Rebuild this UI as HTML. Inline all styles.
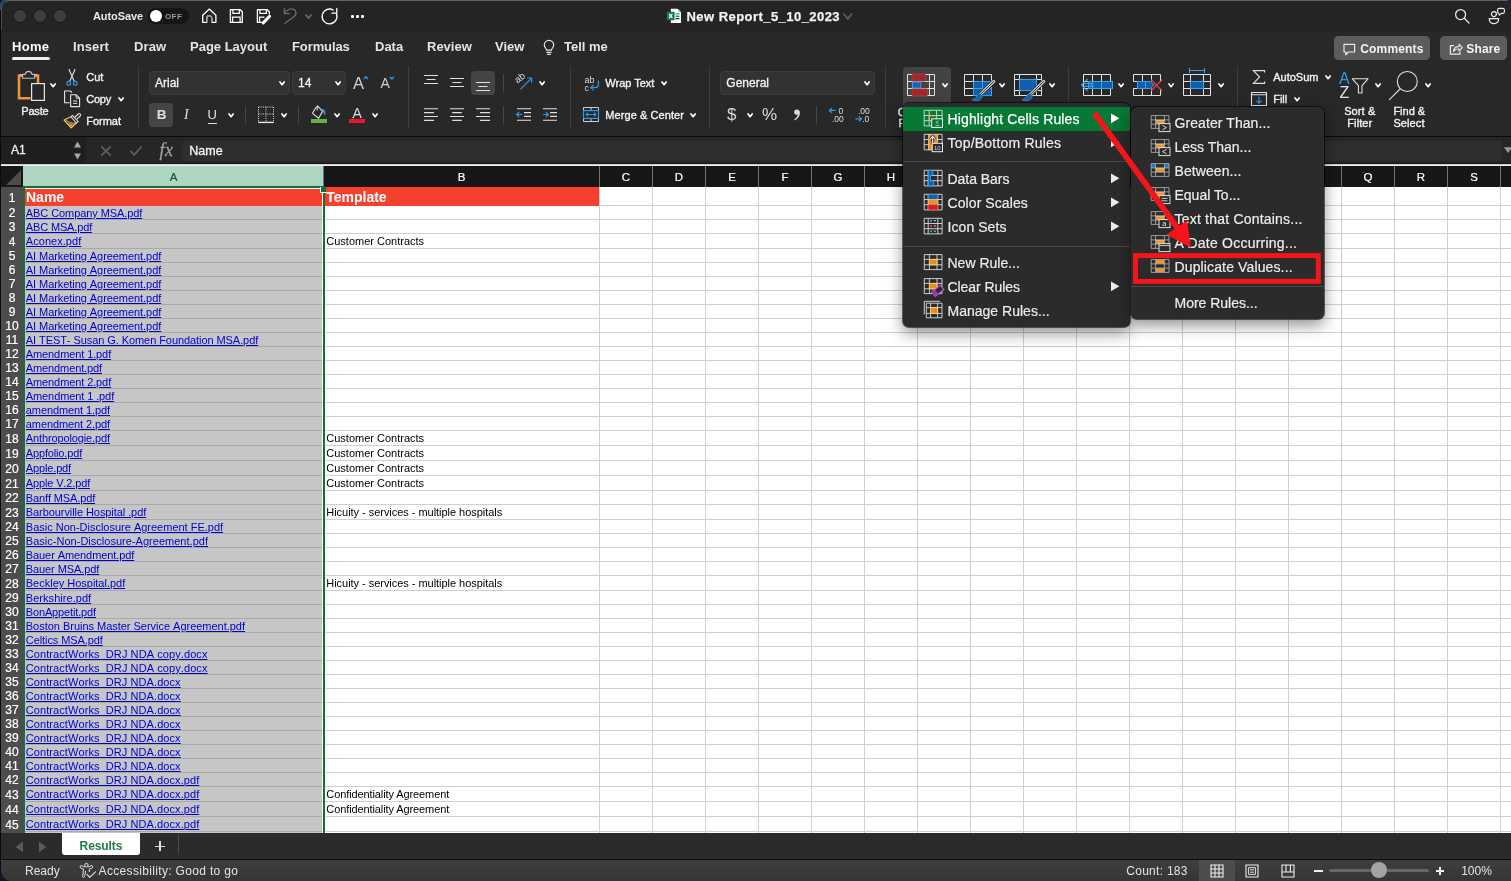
<!DOCTYPE html>
<html lang="en"><head><meta charset="utf-8"><title>New Report_5_10_2023</title>
<style>
html,body{margin:0;padding:0;background:#1e1e1e;}
body{width:1511px;height:881px;overflow:hidden;font-family:"Liberation Sans",sans-serif;}
#app{will-change:transform;position:relative;width:1511px;height:881px;overflow:hidden;background:#282828;color:#e6e6e6;}
#app div, #app span, #app svg{position:absolute;}
#app span.t{white-space:pre;}
/* grid */
#grid{left:0;top:0;width:1511px;height:881px;}
.sheetbg{left:23px;top:187px;width:1488px;height:646px;background:#fff;}
.selA{left:23px;top:187px;width:300px;height:646px;background:#c6c6c6;}
.hl{left:324px;width:1187px;height:1px;background:#cfcfcf;}
.hlA{left:25px;width:298px;height:1px;background:#a9a9a9;}
.vl{top:187px;width:1px;height:646px;background:#cfcfcf;}
.redA{left:25px;top:189px;width:296.700px;height:16.700px;background:#f4402c;}
.a1bg{left:24px;top:187px;width:299px;height:19px;background:#fff;}
.redB{left:325px;top:187px;width:274px;height:19px;background:#f4402c;}
.redA span,.redB span{left:1px;top:-1px;font:bold 14px "Liberation Sans",sans-serif;color:#fff;line-height:19px;white-space:pre;}
.redB span{left:1.200px;top:1px;}
.rowhdr{left:1px;top:187px;width:22px;height:646px;background:#4d4d4d;}
.rh{left:1px;width:22px;text-align:center;-webkit-text-stroke:0.2px #fff;font:12px "Liberation Sans",sans-serif;color:#fff;}
.ca{left:25.8px;width:297px;font:11px "Liberation Sans",sans-serif;font-kerning:none;color:#0000d4;white-space:pre;overflow:hidden;}
.ca u{position:static;text-decoration:underline;text-decoration-thickness:1px;text-underline-offset:1px;}
.cb{left:326.300px;width:272px;font:11px "Liberation Sans",sans-serif;color:#000;white-space:pre;}
.colhdr{left:1px;top:165.500px;width:1510px;height:21.500px;background:#171717;}
.corner{left:1px;top:166px;width:22px;height:21px;background:#171717;}
.corner svg{left:0;top:0;}
.chA{left:23px;top:165.500px;width:301px;height:21.500px;background:#afd6c3;color:#0e5c2f;-webkit-text-stroke:0.2px #0e5c2f;font:11.500px/22.500px "Liberation Sans",sans-serif;text-align:center;}
.ch{top:165.500px;height:21.500px;color:#fff;-webkit-text-stroke:0.2px #fff;font:11.500px/22.500px "Liberation Sans",sans-serif;text-align:center;}
.chsep{top:166px;width:1px;height:21px;background:#747474;}
.selborder{left:23px;top:186px;width:298px;height:660px;border:2px solid #12713a;border-bottom:none;box-sizing:content-box;}
.selhandle{left:320px;top:187px;width:5px;height:5px;background:#12713a;border-left:1px solid #fff;border-bottom:1px solid #fff;}
.selgap{left:322px;top:188px;width:1px;height:645px;background:#fff;}

</style></head>
<body>
<div id="app">
<div id="titlebar" style="left:0;top:0;width:1511px;height:32px;background:#242424;">
<div style="left:0;top:0;width:1511px;height:1px;background:#606060"></div>
<div style="left:14px;top:10px;width:12px;height:12px;border-radius:50%;background:#3e3e3e;box-shadow:0 0 0 0.700px #1a1a1a"></div>
<div style="left:34px;top:10px;width:12px;height:12px;border-radius:50%;background:#3e3e3e;box-shadow:0 0 0 0.700px #1a1a1a"></div>
<div style="left:54px;top:10px;width:12px;height:12px;border-radius:50%;background:#3e3e3e;box-shadow:0 0 0 0.700px #1a1a1a"></div>
<span class="t" style="left:93px;top:6.0px;font:bold 11px 'Liberation Sans',sans-serif;color:#e8e8e8;letter-spacing:-0.1px;;line-height:20px">AutoSave</span>
<div style="left:148px;top:8px;width:41px;height:16px;border-radius:8px;background:#161616;"></div>
<div style="left:150px;top:10px;width:12px;height:12px;border-radius:50%;background:#fff"></div>
<span class="t" style="left:165px;top:6.5px;font:bold 8px 'Liberation Sans',sans-serif;color:#9a9a9a;letter-spacing:0.4px;;line-height:20px">OFF</span>
<!-- home -->
<svg style="left:200px;top:6px" width="20" height="20" viewBox="0 0 20 20"><path d="M2.7 9.2L9.3 3.1L15.9 9.2V16.3H11.8V12.2a2.5 2.5 0 0 0-5 0V16.3H2.7Z" fill="none" stroke="#fff" stroke-width="1.3" stroke-linejoin="round"/><path d="M6.8 16.3V12.2a2.5 2.5 0 0 1 5 0V16.3" fill="none" stroke="#8a8a8a" stroke-width="1.3"/></svg>
<!-- save -->
<svg style="left:227px;top:6px" width="20" height="20" viewBox="0 0 20 20"><path d="M3.4 3.7H13.2L15.3 5.8V16.4H3.4Z" fill="none" stroke="#fff" stroke-width="1.3" stroke-linejoin="round"/><path d="M5.9 3.9V7.3H12.3V3.9" fill="none" stroke="#fff" stroke-width="1.2"/><path d="M5.6 16.2V11.2H13.1V16.2" fill="none" stroke="#fff" stroke-width="1.2"/></svg>
<!-- save edit -->
<svg style="left:254px;top:6px" width="22" height="20" viewBox="0 0 22 20"><path d="M8 16.4H3.4V3.7H13.2L15.3 5.8V8.5" fill="none" stroke="#fff" stroke-width="1.3" stroke-linejoin="round"/><path d="M5.9 3.9V7.3H12.3V3.9" fill="none" stroke="#fff" stroke-width="1.2"/><path d="M5.6 16.2V11.2H10.5" fill="none" stroke="#fff" stroke-width="1.2"/><path d="M9.2 16.9L15.6 10.3" stroke="#fff" stroke-width="3" stroke-linecap="round"/></svg>
<!-- undo (disabled) -->
<svg style="left:281px;top:5px" width="20" height="22" viewBox="0 0 20 22"><path d="M4 18.3L13.2 11.5a4.3 4.3 0 0 0-2.9-7.7C8 3.8 6 5 3.6 8.2" fill="none" stroke="#6a6a6a" stroke-width="1.3" stroke-linecap="round"/><path d="M3.3 3.6V8.6H8.3" fill="none" stroke="#6a6a6a" stroke-width="1.3" stroke-linecap="round" stroke-linejoin="round"/></svg>
<svg style="left:305.48px;top:13.88px" width="7.04" height="5.24" viewBox="-1 -1 7.04 5.24"><path d="M0 0L2.52 3.24L5.04 0" fill="none" stroke="#6a6a6a" stroke-width="1.7" stroke-linecap="round" stroke-linejoin="round"/></svg>
<!-- redo -->
<svg style="left:319px;top:5px" width="22" height="22" viewBox="0 0 22 22"><path d="M17.6 9.2A7.4 7.4 0 1 1 14.2 5" fill="none" stroke="#fff" stroke-width="1.3" stroke-linecap="round"/><path d="M17.8 3.4V8.2H13" fill="none" stroke="#fff" stroke-width="1.3" stroke-linecap="round" stroke-linejoin="round"/></svg>
<div style="left:351px;top:15px;width:3px;height:2.5px;background:#fff;border-radius:1px"></div>
<div style="left:356px;top:15px;width:3px;height:2.5px;background:#fff;border-radius:1px"></div>
<div style="left:361px;top:15px;width:3px;height:2.5px;background:#fff;border-radius:1px"></div>
<!-- excel file icon -->
<svg style="left:666px;top:8px" width="17" height="16" viewBox="0 0 17 16"><path d="M4.8 0.8H11.6L15 4.2V15H4.8Z" fill="#fff"/><path d="M11.6 0.8V4.2H15" fill="#d8d8d8"/><rect x="9.600" y="5.200" width="3.800" height="1.300" fill="#21a366"/><rect x="9.600" y="7.600" width="3.800" height="1.300" fill="#107c41"/><rect x="9.600" y="10" width="3.800" height="1.300" fill="#143d26"/><rect x="0.8" y="3.8" width="7.8" height="8.4" rx="0.8" fill="#14783f"/><path d="M3 5.8L6.4 10.2M6.4 5.8L3 10.2" stroke="#fff" stroke-width="1.2"/></svg>
<span class="t" style="left:686.5px;top:6.5px;font:bold 13px 'Liberation Sans',sans-serif;color:#f2f2f2;-webkit-text-stroke:0.25px #f2f2f2;letter-spacing:0.45px;;line-height:20px">New Report_5_10_2023</span>
<svg style="left:843.22px;top:12.87px" width="9.56" height="6.86" viewBox="-1 -1 9.56 6.86"><path d="M0 0L3.78 4.86L7.56 0" fill="none" stroke="#5e5e5e" stroke-width="1.7" stroke-linecap="round" stroke-linejoin="round"/></svg>
<!-- search -->
<svg style="left:1453px;top:7px" width="18" height="18" viewBox="0 0 18 18"><circle cx="7.6" cy="7.6" r="5" fill="none" stroke="#e8e8e8" stroke-width="1.3"/><path d="M11.3 11.3L16 16" stroke="#e8e8e8" stroke-width="1.3" stroke-linecap="round"/></svg>
<!-- people -->
<svg style="left:1484px;top:5px" width="24" height="22" viewBox="0 0 24 22"><circle cx="9.900" cy="9.100" r="2.500" fill="none" stroke="#f0f0f0" stroke-width="1.200"/><path d="M5.200 13.600H14.600C14.600 16.800 12.600 18.700 9.900 18.700S5.200 16.800 5.200 13.600Z" fill="none" stroke="#f0f0f0" stroke-width="1.200" stroke-linejoin="round"/><path d="M15.200 3.400H18.800A1.600 1.600 0 0 1 20.400 5V6.800A1.600 1.600 0 0 1 18.800 8.400H17.400L15.400 10.200L14.800 8.400A1.600 1.600 0 0 1 13.600 6.800V5A1.600 1.600 0 0 1 15.200 3.400Z" fill="none" stroke="#f0f0f0" stroke-width="1.100" stroke-linejoin="round"/></svg>
</div>

<div id="tabs" style="left:0;top:32px;width:1511px;height:32px;background:#282828;">
<span class="t" style="left:12px;top:4.5px;font:bold 13px 'Liberation Sans',sans-serif;color:#fff;letter-spacing:0.3px;;line-height:20px">Home</span>
<div style="left:12px;top:25px;width:38px;height:3px;border-radius:1.5px;background:#ededed"></div>
<span class="t" style="left:73px;top:4.5px;font:bold 13px 'Liberation Sans',sans-serif;color:#e4e4e4;letter-spacing:0.1px;;line-height:20px">Insert</span>
<span class="t" style="left:134px;top:4.5px;font:bold 13px 'Liberation Sans',sans-serif;color:#e4e4e4;letter-spacing:0.1px;;line-height:20px">Draw</span>
<span class="t" style="left:190px;top:4.5px;font:bold 13px 'Liberation Sans',sans-serif;color:#e4e4e4;;line-height:20px">Page Layout</span>
<span class="t" style="left:292px;top:4.5px;font:bold 13px 'Liberation Sans',sans-serif;color:#e4e4e4;letter-spacing:-0.1px;;line-height:20px">Formulas</span>
<span class="t" style="left:375px;top:4.5px;font:bold 13px 'Liberation Sans',sans-serif;color:#e4e4e4;;line-height:20px">Data</span>
<span class="t" style="left:427px;top:4.5px;font:bold 13px 'Liberation Sans',sans-serif;color:#e4e4e4;;line-height:20px">Review</span>
<span class="t" style="left:495px;top:4.5px;font:bold 13px 'Liberation Sans',sans-serif;color:#e4e4e4;;line-height:20px">View</span>
<svg style="left:541px;top:5px" width="16" height="20" viewBox="0 0 16 20"><path d="M5.6 13.2c0-1.6-2.3-2.6-2.3-5.2a4.7 4.7 0 0 1 9.4 0c0 2.6-2.3 3.6-2.3 5.2Z" fill="none" stroke="#e4e4e4" stroke-width="1.2" stroke-linejoin="round"/><path d="M5.9 15.4H10.1M6.6 17.4H9.4" stroke="#e4e4e4" stroke-width="1.2" stroke-linecap="round"/></svg>
<span class="t" style="left:564px;top:4.5px;font:bold 13px 'Liberation Sans',sans-serif;color:#e4e4e4;;line-height:20px">Tell me</span>
<div style="left:1334px;top:4px;width:95.800px;height:23.700px;border-radius:4.500px;background:#5c5c5c"></div>
<svg style="left:1341.500px;top:9.800px" width="16" height="16" viewBox="0 0 16 16"><path d="M2 2.3H12.6V10H6.4L3.8 12.8V10H2Z" fill="none" stroke="#e8e8e8" stroke-width="1.2" stroke-linejoin="round"/></svg>
<span class="t" style="left:1360.300px;top:6.699999999999999px;font:bold 12px 'Liberation Sans',sans-serif;color:#f4f4f4;letter-spacing:0.15px;;line-height:20px">Comments</span>
<div style="left:1440px;top:4px;width:67px;height:23.700px;border-radius:4.500px;background:#5c5c5c"></div>
<svg style="left:1447.500px;top:8.500px" width="16" height="16" viewBox="0 0 16 16"><path d="M6 4.6H2.4V13.2H12V10.6" fill="none" stroke="#e8e8e8" stroke-width="1.2" stroke-linejoin="round"/><path d="M5.4 10.4c.4-3 2.4-4.8 5.6-4.8V3.2L14.4 6.6L11 10V7.8c-2.4 0-4 .6-5.6 2.6Z" fill="none" stroke="#e8e8e8" stroke-width="1.1" stroke-linejoin="round"/></svg>
<span class="t" style="left:1466.300px;top:6.699999999999999px;font:bold 12px 'Liberation Sans',sans-serif;color:#f4f4f4;letter-spacing:0.15px;;line-height:20px">Share</span>
</div>

<div id="ribbon" style="left:0;top:64px;width:1511px;height:73px;background:#282828;">
<div style="left:0;top:71.500px;width:1511px;height:1.700px;background:#0a0a0a"></div>
<!-- ===== clipboard ===== -->
<svg style="left:16px;top:5px" width="32" height="34" viewBox="0 0 32 34">
<path d="M7.2 6.8H3V29.3H14.5M19 6.8H22V14.5" fill="none" stroke="#f0953a" stroke-width="2.6"/>
<path d="M7.2 5.6H3.1M22 5.6H19" stroke="#f8c98b" stroke-width="0.8" fill="none"/>
<path d="M6.6 9.2V5.4H9.2C9.6 3.4 10.9 2.4 12.6 2.4S15.6 3.4 16 5.4H18.6V9.2Z" fill="#282828" stroke="#bdbdbd" stroke-width="1.1" stroke-linejoin="round"/>
<rect x="15.6" y="14.6" width="12.8" height="16.8" fill="#282828" stroke="#e6e6e6" stroke-width="1.2"/>
</svg>
<svg style="left:50.10px;top:19.15px" width="6.20" height="4.70" viewBox="-1 -1 6.20 4.70"><path d="M0 0L2.10 2.70L4.20 0" fill="none" stroke="#fff" stroke-width="1.7" stroke-linecap="round" stroke-linejoin="round"/></svg>
<span class="t" style="left:21.3px;top:36.9px;font:11px 'Liberation Sans',sans-serif;color:#f2f2f2;-webkit-text-stroke:0.35px #f2f2f2;letter-spacing:-0.2px;line-height:20px">Paste</span>
<!-- scissors -->
<svg style="left:64px;top:4px" width="16" height="19" viewBox="0 0 16 19">
<path d="M5 1.5L10.2 13.2M11 1.5L5.8 13.2" stroke="#e6e6e6" stroke-width="1.1" stroke-linecap="round" fill="none"/>
<circle cx="4.7" cy="15.3" r="1.9" fill="none" stroke="#2f97e6" stroke-width="1.2"/>
<circle cx="11.3" cy="15.3" r="1.9" fill="none" stroke="#2f97e6" stroke-width="1.2"/>
</svg>
<span class="t" style="left:86.2px;top:3.3000000000000007px;font:11px 'Liberation Sans',sans-serif;color:#f2f2f2;-webkit-text-stroke:0.35px #f2f2f2;line-height:20px">Cut</span>
<!-- copy -->
<svg style="left:63px;top:25.300px" width="19" height="19" viewBox="0 0 19 19">
<path d="M6.6 13.8H1.6V2H7.4L9 3.6" fill="none" stroke="#e6e6e6" stroke-width="1.1" stroke-linejoin="round"/>
<path d="M7.6 5.8H13.2L16.6 9.2V17.6H7.6Z" fill="none" stroke="#e6e6e6" stroke-width="1.1" stroke-linejoin="round"/>
<path d="M13.2 5.8V9.2H16.6" fill="none" stroke="#e6e6e6" stroke-width="1"/>
<path d="M10.2 12H14.2M10.2 14.4H14.2" stroke="#e6e6e6" stroke-width="1"/>
</svg>
<span class="t" style="left:86.2px;top:25.0px;font:11px 'Liberation Sans',sans-serif;color:#f2f2f2;-webkit-text-stroke:0.35px #f2f2f2;letter-spacing:-0.2px;line-height:20px">Copy</span>
<svg style="left:118.10px;top:33.15px" width="6.20" height="4.70" viewBox="-1 -1 6.20 4.70"><path d="M0 0L2.10 2.70L4.20 0" fill="none" stroke="#fff" stroke-width="1.7" stroke-linecap="round" stroke-linejoin="round"/></svg>
<!-- format painter -->
<svg style="left:63px;top:48px" width="19" height="18" viewBox="0 0 19 18">
<path d="M4.900 11.300L10.600 12.100L8.200 15.100Z" fill="#ea8a24"/>
<path d="M7.900 4.700L1.100 8L8.200 15.900L13.300 11" fill="none" stroke="#f5c869" stroke-width="1.200" stroke-linejoin="round"/>
<path d="M3.200 8.400C6 10.600 9 11.400 12.400 11.200" fill="none" stroke="#f5c869" stroke-width="0.900"/>
<path d="M7.900 4.700L9.500 3.300L15.200 9.600L13.300 11Z" fill="none" stroke="#d8d8d8" stroke-width="1.100" stroke-linejoin="round"/>
<path d="M11.500 5.500L15.300 2A1.300 1.300 0 0 1 17.200 4L13.400 7.600" fill="none" stroke="#d8d8d8" stroke-width="1.100" stroke-linejoin="round"/>
</svg>
<span class="t" style="left:86.2px;top:47.0px;font:11px 'Liberation Sans',sans-serif;color:#f2f2f2;-webkit-text-stroke:0.35px #f2f2f2;line-height:20px">Format</span>
<div style="left:138px;top:2px;width:1px;height:62px;background:#3d3d3d"></div>
<!-- ===== font ===== -->
<div style="left:149px;top:7px;width:141px;height:24px;box-sizing:border-box;border:1px solid #3c3c3c;border-radius:4px;background:#323232"></div>
<span class="t" style="left:155px;top:9.0px;font:12px 'Liberation Sans',sans-serif;color:#f2f2f2;-webkit-text-stroke:0.3px #f2f2f2;line-height:20px">Arial</span>
<svg style="left:278.90px;top:17.15px" width="6.20" height="4.70" viewBox="-1 -1 6.20 4.70"><path d="M0 0L2.10 2.70L4.20 0" fill="none" stroke="#fff" stroke-width="1.7" stroke-linecap="round" stroke-linejoin="round"/></svg>
<div style="left:292px;top:7px;width:54px;height:24px;box-sizing:border-box;border:1px solid #3c3c3c;border-radius:4px;background:#323232"></div>
<span class="t" style="left:298px;top:9.0px;font:12px 'Liberation Sans',sans-serif;color:#f2f2f2;-webkit-text-stroke:0.3px #f2f2f2;line-height:20px">14</span>
<svg style="left:334.90px;top:17.15px" width="6.20" height="4.70" viewBox="-1 -1 6.20 4.70"><path d="M0 0L2.10 2.70L4.20 0" fill="none" stroke="#fff" stroke-width="1.7" stroke-linecap="round" stroke-linejoin="round"/></svg>
<span class="t" style="left:353px;top:8.5px;font:16.500px 'Liberation Sans',sans-serif;color:#d0d0d0;line-height:20px">A</span>
<svg style="left:362px;top:11px" width="8" height="6" viewBox="0 0 8 6"><path d="M1.800 4L3.900 1.800L6 4" fill="none" stroke="#2f97e6" stroke-width="1.300"/></svg>
<span class="t" style="left:380.400px;top:9.3px;font:14px 'Liberation Sans',sans-serif;color:#d0d0d0;line-height:20px">A</span>
<svg style="left:388px;top:11px" width="8" height="6" viewBox="0 0 8 6"><path d="M1.800 1.800L3.900 4L6 1.800" fill="none" stroke="#2f97e6" stroke-width="1.300"/></svg>
<div style="left:149px;top:39px;width:24px;height:24px;border-radius:4px;background:#454545"></div>
<span class="t" style="left:156.8px;top:41.0px;font:bold 13.5px 'Liberation Sans',sans-serif;color:#e0e0e0;line-height:20px">B</span>
<span class="t" style="left:184px;top:41.0px;font:italic 14px 'Liberation Serif',serif;color:#e0e0e0;line-height:20px">I</span>
<span class="t" style="left:207.5px;top:40.5px;font:13px 'Liberation Sans',sans-serif;color:#e0e0e0;line-height:20px">U</span>
<div style="left:207.5px;top:59px;width:9.5px;height:1px;background:#e0e0e0"></div>
<svg style="left:227.90px;top:49.15px" width="6.20" height="4.70" viewBox="-1 -1 6.20 4.70"><path d="M0 0L2.10 2.70L4.20 0" fill="none" stroke="#fff" stroke-width="1.7" stroke-linecap="round" stroke-linejoin="round"/></svg>
<div style="left:245px;top:42px;width:1px;height:18px;background:#444"></div>
<!-- borders icon -->
<svg style="left:257px;top:41px" width="18" height="20" viewBox="0 0 18 20">
<path d="M1.5 2H16.5M1.5 2V16M16.5 2V16M9 2V16M1.5 9H16.5" fill="none" stroke="#e0e0e0" stroke-width="1" stroke-dasharray="1 1.2"/>
<path d="M1.2 17.4H16.8" stroke="#e6e6e6" stroke-width="1.4"/>
</svg>
<svg style="left:280.90px;top:49.15px" width="6.20" height="4.70" viewBox="-1 -1 6.20 4.70"><path d="M0 0L2.10 2.70L4.20 0" fill="none" stroke="#fff" stroke-width="1.7" stroke-linecap="round" stroke-linejoin="round"/></svg>
<div style="left:298px;top:42px;width:1px;height:18px;background:#444"></div>
<!-- fill -->
<svg style="left:309px;top:40px" width="20" height="16" viewBox="0 0 20 16">
<path d="M6.4 4.2L3.4 9.4L9.6 14.2L13.6 7.4L8.8 2.2Z" fill="none" stroke="#e0e0e0" stroke-width="1.1" stroke-linejoin="round"/>
<path d="M8.2 6.4V1.6" stroke="#e0e0e0" stroke-width="1"/>
<path d="M13.6 5.6c1.6.8 2.4 2.4 2 4.400" fill="none" stroke="#2f97e6" stroke-width="1.6" stroke-linecap="round"/>
</svg>
<div style="left:311px;top:55.300px;width:16px;height:4px;background:#62b246"></div>
<svg style="left:333.90px;top:49.15px" width="6.20" height="4.70" viewBox="-1 -1 6.20 4.70"><path d="M0 0L2.10 2.70L4.20 0" fill="none" stroke="#fff" stroke-width="1.7" stroke-linecap="round" stroke-linejoin="round"/></svg>
<span class="t" style="left:352.500px;top:38.5px;font:14px 'Liberation Sans',sans-serif;color:#d8d8d8;line-height:20px">A</span>
<div style="left:349px;top:55.300px;width:16px;height:4px;background:#f0142a"></div>
<svg style="left:371.90px;top:49.15px" width="6.20" height="4.70" viewBox="-1 -1 6.20 4.70"><path d="M0 0L2.10 2.70L4.20 0" fill="none" stroke="#fff" stroke-width="1.7" stroke-linecap="round" stroke-linejoin="round"/></svg>
<div style="left:408px;top:2px;width:1px;height:62px;background:#3d3d3d"></div>
<!-- ===== alignment ===== -->
<svg style="left:423px;top:9px" width="16" height="14" viewBox="0 0 16 14"><path d="M1 2.5H15M3.5 6.5H12.5M1 10.5H15" stroke="#e0e0e0" stroke-width="1.1"/></svg>
<svg style="left:449px;top:12px" width="16" height="14" viewBox="0 0 16 14"><path d="M1 2.5H15M3.5 6.5H12.5M1 10.5H15" stroke="#e0e0e0" stroke-width="1.1"/></svg>
<div style="left:471px;top:7px;width:24px;height:24px;border-radius:4px;background:#454545"></div>
<svg style="left:475px;top:16px" width="16" height="14" viewBox="0 0 16 14"><path d="M1 2.5H15M3.5 6.5H12.5M1 10.5H15" stroke="#e0e0e0" stroke-width="1.1"/></svg>
<svg style="left:423px;top:42px" width="16" height="17" viewBox="0 0 16 17"><path d="M1 2.7H15M1 6.6H11M1 10.5H15M1 14.4H11" stroke="#e0e0e0" stroke-width="1.1"/></svg>
<svg style="left:449px;top:42px" width="16" height="17" viewBox="0 0 16 17"><path d="M1 2.7H15M3.2 6.600H12.8M1 10.5H15M3.2 14.4H12.8" stroke="#e0e0e0" stroke-width="1.1"/></svg>
<svg style="left:475px;top:42px" width="16" height="17" viewBox="0 0 16 17"><path d="M1 2.7H15M5 6.6H15M1 10.5H15M5 14.4H15" stroke="#e0e0e0" stroke-width="1.1"/></svg>
<div style="left:503px;top:10px;width:1px;height:18px;background:#444"></div>
<div style="left:503px;top:42px;width:1px;height:18px;background:#444"></div>
<!-- orientation -->
<svg style="left:514px;top:9px" width="20" height="18" viewBox="0 0 20 18">
<text transform="translate(3.6 10.4) rotate(-38)" font-family="Liberation Sans, sans-serif" font-size="9.5" fill="#e0e0e0">ab</text>
<path d="M6.4 16.4L17.4 5.400" stroke="#2f97e6" stroke-width="1.2" fill="none"/><path d="M13.2 5H17.6V9.4" stroke="#2f97e6" stroke-width="1.2" fill="none"/>
</svg>
<svg style="left:538.90px;top:17.15px" width="6.20" height="4.70" viewBox="-1 -1 6.20 4.70"><path d="M0 0L2.10 2.70L4.20 0" fill="none" stroke="#fff" stroke-width="1.7" stroke-linecap="round" stroke-linejoin="round"/></svg>
<!-- indent icons -->
<svg style="left:515px;top:43px" width="18" height="15" viewBox="0 0 18 15"><path d="M2 1.8H16M9 5.6H16M9 9.400H16M2 13.2H16" stroke="#e0e0e0" stroke-width="1.1"/><path d="M7.2 7.5H1.8M4.2 5L1.6 7.5L4.200 10" fill="none" stroke="#2f97e6" stroke-width="1.2"/></svg>
<svg style="left:541px;top:43px" width="18" height="15" viewBox="0 0 18 15"><path d="M2 1.8H16M9 5.6H16M9 9.400H16M2 13.2H16" stroke="#e0e0e0" stroke-width="1.1"/><path d="M1.800 7.500H7.200M4.800 5L7.400 7.500L4.800 10" fill="none" stroke="#2f97e6" stroke-width="1.2"/></svg>
<div style="left:570px;top:2px;width:1px;height:62px;background:#3d3d3d"></div>
<!-- wrap text -->
<svg style="left:583px;top:11px" width="18" height="17" viewBox="0 0 18 17">
<text x="1.400" y="7.6" font-family="Liberation Sans, sans-serif" font-size="9" fill="#dcdcdc">ab</text>
<text x="1.600" y="15.6" font-family="Liberation Sans, sans-serif" font-size="9" fill="#dcdcdc">c</text>
<path d="M15.4 5.6V9.600c0 2-1.200 3-3 3H8" fill="none" stroke="#2f97e6" stroke-width="1.2"/><path d="M10.600 9.800L7.800 12.600L10.600 15.400" fill="none" stroke="#2f97e6" stroke-width="1.2"/>
</svg>
<span class="t" style="left:605.3px;top:9.0px;font:11px 'Liberation Sans',sans-serif;color:#f2f2f2;-webkit-text-stroke:0.35px #f2f2f2;line-height:20px">Wrap Text</span>
<svg style="left:660.90px;top:17.15px" width="6.20" height="4.70" viewBox="-1 -1 6.20 4.70"><path d="M0 0L2.10 2.70L4.20 0" fill="none" stroke="#fff" stroke-width="1.7" stroke-linecap="round" stroke-linejoin="round"/></svg>
<!-- merge -->
<svg style="left:582px;top:42px" width="18" height="17" viewBox="0 0 18 17">
<path d="M1.5 1.5H16.5V15.5H1.5Z" fill="none" stroke="#cfcfcf" stroke-width="1"/>
<path d="M9 1.5V4.6M9 12.400V15.500" stroke="#cfcfcf" stroke-width="1"/>
<rect x="1.500" y="4.600" width="15" height="7.800" fill="#282828" stroke="#2f97e6" stroke-width="1.2"/>
<path d="M4.200 8.500H13.800M6 6.600L4 8.500L6 10.400M12 6.600L14 8.500L12 10.400" fill="none" stroke="#2f97e6" stroke-width="1.1"/>
</svg>
<span class="t" style="left:605.3px;top:41.3px;font:11px 'Liberation Sans',sans-serif;color:#f2f2f2;-webkit-text-stroke:0.35px #f2f2f2;letter-spacing:0.08px;line-height:20px">Merge &amp; Center</span>
<svg style="left:689.90px;top:49.15px" width="6.20" height="4.70" viewBox="-1 -1 6.20 4.70"><path d="M0 0L2.10 2.70L4.20 0" fill="none" stroke="#fff" stroke-width="1.7" stroke-linecap="round" stroke-linejoin="round"/></svg>
<div style="left:709px;top:2px;width:1px;height:62px;background:#3d3d3d"></div>
<!-- ===== number ===== -->
<div style="left:720px;top:7px;width:155px;height:24px;box-sizing:border-box;border:1px solid #3c3c3c;border-radius:4px;background:#323232"></div>
<span class="t" style="left:726.3px;top:9.0px;font:12px 'Liberation Sans',sans-serif;color:#f2f2f2;-webkit-text-stroke:0.3px #f2f2f2;line-height:20px">General</span>
<svg style="left:864.20px;top:17.15px" width="6.20" height="4.70" viewBox="-1 -1 6.20 4.70"><path d="M0 0L2.10 2.70L4.20 0" fill="none" stroke="#fff" stroke-width="1.7" stroke-linecap="round" stroke-linejoin="round"/></svg>
<span class="t" style="left:727px;top:41.0px;font:17px 'Liberation Sans',sans-serif;color:#d8d8d8;line-height:20px">$</span>
<svg style="left:746.90px;top:49.15px" width="6.20" height="4.70" viewBox="-1 -1 6.20 4.70"><path d="M0 0L2.10 2.70L4.20 0" fill="none" stroke="#fff" stroke-width="1.7" stroke-linecap="round" stroke-linejoin="round"/></svg>
<span class="t" style="left:762px;top:41.0px;font:17px 'Liberation Sans',sans-serif;color:#d8d8d8;line-height:20px">%</span>
<svg style="left:790px;top:43px" width="14" height="16" viewBox="0 0 14 16"><path d="M7 2.400a2.700 2.700 0 1 0 0.800 5.200c-.3 1.900-1.500 3.500-3.600 4.900l.6.900c3.100-1.700 5.200-4.500 5.200-7.700c0-2-1.200-3.300-3-3.300Z" fill="#d8d8d8"/></svg>
<div style="left:816px;top:42px;width:1px;height:18px;background:#444"></div>
<svg style="left:828px;top:42px" width="18" height="18" viewBox="0 0 18 18">
<path d="M7.600 4.400H1.600M4 2L1.400 4.400L4 6.800" fill="none" stroke="#2f97e6" stroke-width="1.2"/>
<text x="10.400" y="7.800" font-family="Liberation Sans, sans-serif" font-size="8.500" fill="#dcdcdc">0</text>
<text x="4" y="16.400" font-family="Liberation Sans, sans-serif" font-size="8.500" fill="#dcdcdc">.00</text>
</svg>
<svg style="left:854px;top:42px" width="18" height="18" viewBox="0 0 18 18">
<text x="4" y="7.800" font-family="Liberation Sans, sans-serif" font-size="8.500" fill="#dcdcdc">.00</text>
<path d="M1.400 12.800H7.400M5 10.400L7.600 12.800L5 15.200" fill="none" stroke="#2f97e6" stroke-width="1.2"/>
<text x="8.200" y="16.400" font-family="Liberation Sans, sans-serif" font-size="8.500" fill="#dcdcdc">.0</text>
</svg>
<div style="left:885px;top:2px;width:1px;height:62px;background:#3d3d3d"></div>
<!-- ===== styles ===== -->
<div style="left:903px;top:3px;width:48px;height:62px;border-radius:4px;background:#434343"></div>
<svg style="left:906px;top:9px" width="31" height="24" viewBox="0 0 31 24">
<path d="M1.500 1.500H28.500V22.500H1.500ZM6.500 1.500V22.500M23.500 1.500V22.500M1.500 8.500H28.500M1.500 15.500H28.500" fill="none" stroke="#e2e2e2" stroke-width="1"/>
<rect x="6" y="1" width="13.400" height="7.200" fill="#a4262c" stroke="#c8444c" stroke-width="0.600"/><rect x="6" y="15.800" width="15.200" height="7.200" fill="#a4262c" stroke="#c8444c" stroke-width="0.600"/>
<rect x="6.400" y="9" width="8.400" height="6" fill="#1764ab" stroke="#3aa0e8" stroke-width="0.900"/>
</svg>
<svg style="left:941.90px;top:19.15px" width="6.20" height="4.70" viewBox="-1 -1 6.20 4.70"><path d="M0 0L2.10 2.70L4.20 0" fill="none" stroke="#fff" stroke-width="1.7" stroke-linecap="round" stroke-linejoin="round"/></svg>
<span class="t" style="left:897.8px;top:37.5px;font:11px 'Liberation Sans',sans-serif;color:#f2f2f2;-webkit-text-stroke:0.35px #f2f2f2;line-height:20px">Conditional</span>
<span class="t" style="left:898.4px;top:49.3px;font:11px 'Liberation Sans',sans-serif;color:#f2f2f2;-webkit-text-stroke:0.35px #f2f2f2;line-height:20px">Formatting</span>
<!-- format as table -->
<svg style="left:962px;top:8px" width="34" height="30" viewBox="0 0 34 30">
<rect x="11.500" y="9.500" width="18" height="14" fill="#0f5fae"/>
<path d="M2.500 2.500H29.500V23.500H2.500ZM11.500 2.500V23.500M20.500 2.500V23.500M2.500 9.500H29.500M2.500 16.500H29.500" fill="none" stroke="#e2e2e2" stroke-width="1"/>
<path d="M11.500 9.500H29.500V23.500H11.500ZM20.500 9.500V23.500M11.500 16.500H29.500" fill="none" stroke="#3aa0e8" stroke-width="1"/>
<path d="M31.600 9.600L17.600 23.200" stroke="#282828" stroke-width="4.400" stroke-linecap="round"/>
<path d="M31.800 9.400L18 22.800" stroke="#d4d4d4" stroke-width="2.900" stroke-linecap="round"/>
<path d="M31.600 9.600L18.600 22.200" stroke="#282828" stroke-width="1" stroke-linecap="round"/>
<path d="M10 27.600c3.400-.4 4.400-2 5-4.200c.8-2 3.400-2.200 4.600-.6c1.200 1.800.2 4.600-3 5.600c-2.400.6-5 .2-6.600-.8Z" fill="#1764ab" stroke="#3aa0e8" stroke-width="0.700"/>
</svg>
<svg style="left:998.90px;top:19.15px" width="6.20" height="4.70" viewBox="-1 -1 6.20 4.70"><path d="M0 0L2.10 2.70L4.20 0" fill="none" stroke="#fff" stroke-width="1.7" stroke-linecap="round" stroke-linejoin="round"/></svg>
<!-- cell styles -->
<svg style="left:1012px;top:8px" width="34" height="30" viewBox="0 0 34 30">
<path d="M2.500 2.500H29.500V23.500H2.500ZM7.500 2.500V23.500M24.500 2.500V23.500M2.500 7.500H29.500M2.500 18.500H29.500" fill="none" stroke="#e2e2e2" stroke-width="1"/>
<rect x="7.500" y="7.500" width="17" height="11" fill="#0f5fae" stroke="#3aa0e8" stroke-width="1"/>
<path d="M31.600 9.600L17.600 23.200" stroke="#282828" stroke-width="4.400" stroke-linecap="round"/>
<path d="M31.800 9.400L18 22.800" stroke="#d4d4d4" stroke-width="2.900" stroke-linecap="round"/>
<path d="M31.600 9.600L18.600 22.200" stroke="#282828" stroke-width="1" stroke-linecap="round"/>
<path d="M10 27.600c3.400-.4 4.400-2 5-4.200c.8-2 3.400-2.200 4.600-.6c1.200 1.800.2 4.600-3 5.600c-2.400.6-5 .2-6.600-.8Z" fill="#1764ab" stroke="#3aa0e8" stroke-width="0.700"/>
</svg>
<svg style="left:1048.90px;top:19.15px" width="6.20" height="4.70" viewBox="-1 -1 6.20 4.70"><path d="M0 0L2.10 2.70L4.20 0" fill="none" stroke="#fff" stroke-width="1.7" stroke-linecap="round" stroke-linejoin="round"/></svg>
<div style="left:1068px;top:2px;width:1px;height:62px;background:#3d3d3d"></div>
<!-- ===== cells ===== -->
<svg style="left:1079px;top:8px" width="36" height="26" viewBox="0 0 36 26">
<path d="M4.500 2.500H31.500V23.500H4.500ZM13.500 2.500V23.500M22.500 2.500V23.500M4.500 9.500H31.500M4.500 16.500H31.500" fill="none" stroke="#e2e2e2" stroke-width="1"/>
<rect x="9.500" y="9.500" width="24" height="7" fill="#0f5fae" stroke="#3aa0e8" stroke-width="1"/>
<path d="M13.500 9.500V16.500M22.500 9.500V16.500" stroke="#3aa0e8" stroke-width="1"/>
<path d="M14.500 11.600H4.800M14.500 14.400H4.800M8.600 6.800L2.400 13L8.600 19.200" fill="none" stroke="#3aa0e8" stroke-width="1.200"/>
</svg>
<svg style="left:1117.90px;top:19.15px" width="6.20" height="4.70" viewBox="-1 -1 6.20 4.70"><path d="M0 0L2.10 2.70L4.20 0" fill="none" stroke="#fff" stroke-width="1.7" stroke-linecap="round" stroke-linejoin="round"/></svg>
<svg style="left:1129px;top:8px" width="36" height="26" viewBox="0 0 36 26">
<path d="M4.500 9.500V2.500H31.500V9.500M4.500 16.500V23.500H31.500V16.500M13.500 2.500V9.500M22.500 2.500V9.500M13.500 16.500V23.500M22.500 16.500V23.500M4.500 9.500H8.500M4.500 16.500H8.500" fill="none" stroke="#e2e2e2" stroke-width="1"/>
<path d="M8.500 9.500H21L25 13L21 16.500H8.500Z" fill="#0f5fae" stroke="#3aa0e8" stroke-width="1"/>
<path d="M16.500 9.500V16.500" stroke="#3aa0e8" stroke-width="1"/>
<path d="M22 7.600L33.200 19M33.200 7.600L22 19" stroke="#e8414d" stroke-width="1.300"/>
</svg>
<svg style="left:1167.90px;top:19.15px" width="6.20" height="4.70" viewBox="-1 -1 6.20 4.70"><path d="M0 0L2.10 2.70L4.20 0" fill="none" stroke="#fff" stroke-width="1.7" stroke-linecap="round" stroke-linejoin="round"/></svg>
<svg style="left:1179px;top:1px" width="36" height="33" viewBox="0 0 36 33">
<path d="M4.500 9.500H31.500V30.500H4.500ZM11.500 9.500V30.500M24.500 9.500V30.500M4.500 16.500H31.500M4.500 23.500H31.500" fill="none" stroke="#e2e2e2" stroke-width="1"/>
<rect x="11.500" y="16.500" width="13" height="7" fill="#0f5fae" stroke="#3aa0e8" stroke-width="1"/>
<path d="M10.500 5.500H25.500M10.500 3V8M25.500 3V8" stroke="#3aa0e8" stroke-width="1.100"/>
</svg>
<svg style="left:1217.90px;top:19.15px" width="6.20" height="4.70" viewBox="-1 -1 6.20 4.70"><path d="M0 0L2.10 2.70L4.20 0" fill="none" stroke="#fff" stroke-width="1.7" stroke-linecap="round" stroke-linejoin="round"/></svg>
<div style="left:1237px;top:2px;width:1px;height:62px;background:#3d3d3d"></div>
<!-- ===== editing ===== -->
<svg style="left:1251px;top:5px" width="16" height="16" viewBox="0 0 16 16"><path d="M13.600 3.600V1.600H2.400L8.600 8L2.400 14.400H13.600V12.400" fill="none" stroke="#e0e0e0" stroke-width="1.100" stroke-linejoin="miter"/></svg>
<span class="t" style="left:1273.2px;top:3.3000000000000007px;font:11px 'Liberation Sans',sans-serif;color:#f2f2f2;-webkit-text-stroke:0.35px #f2f2f2;line-height:20px">AutoSum</span>
<svg style="left:1324.70px;top:11.15px" width="6.20" height="4.70" viewBox="-1 -1 6.20 4.70"><path d="M0 0L2.10 2.70L4.20 0" fill="none" stroke="#fff" stroke-width="1.7" stroke-linecap="round" stroke-linejoin="round"/></svg>
<svg style="left:1250px;top:27px" width="18" height="16" viewBox="0 0 18 16"><path d="M1.500 1.500H16.500V14.500H1.500ZM1.500 3.800H16.500" fill="none" stroke="#e0e0e0" stroke-width="1.100"/><path d="M9 5.800V12M6.400 9.600L9 12.200L11.600 9.600" fill="none" stroke="#2f97e6" stroke-width="1.200"/></svg>
<span class="t" style="left:1273.2px;top:25.200000000000003px;font:11px 'Liberation Sans',sans-serif;color:#f2f2f2;-webkit-text-stroke:0.35px #f2f2f2;line-height:20px">Fill</span>
<svg style="left:1293.70px;top:33.15px" width="6.20" height="4.70" viewBox="-1 -1 6.20 4.70"><path d="M0 0L2.10 2.70L4.20 0" fill="none" stroke="#fff" stroke-width="1.7" stroke-linecap="round" stroke-linejoin="round"/></svg>
<!-- sort & filter -->
<span class="t" style="left:1339px;top:4.5px;font:16px 'Liberation Sans',sans-serif;color:#2f97e6;line-height:20px">A</span>
<span class="t" style="left:1339.500px;top:18.7px;font:16px 'Liberation Sans',sans-serif;color:#e0e0e0;line-height:20px">Z</span>
<svg style="left:1351px;top:13px" width="19" height="18" viewBox="0 0 19 18"><path d="M1.400 1.800H17L11 8.600V16H7.400V8.600Z" fill="none" stroke="#e0e0e0" stroke-width="1.100" stroke-linejoin="round"/></svg>
<svg style="left:1374.90px;top:19.15px" width="6.20" height="4.70" viewBox="-1 -1 6.20 4.70"><path d="M0 0L2.10 2.70L4.20 0" fill="none" stroke="#fff" stroke-width="1.7" stroke-linecap="round" stroke-linejoin="round"/></svg>
<span class="t" style="left:1344.200px;top:37.3px;font:11px 'Liberation Sans',sans-serif;color:#f2f2f2;-webkit-text-stroke:0.35px #f2f2f2;letter-spacing:0.1px;line-height:20px">Sort &amp;</span>
<span class="t" style="left:1347.300px;top:49.2px;font:11px 'Liberation Sans',sans-serif;color:#f2f2f2;-webkit-text-stroke:0.35px #f2f2f2;letter-spacing:0.1px;line-height:20px">Filter</span>
<svg style="left:1386px;top:5px" width="34" height="34" viewBox="0 0 34 34"><circle cx="21.300" cy="12.500" r="10" fill="none" stroke="#e0e0e0" stroke-width="1.100"/><path d="M14 20L3.400 30.600" stroke="#e0e0e0" stroke-width="1.100" stroke-linecap="round"/></svg>
<svg style="left:1425.10px;top:19.15px" width="6.20" height="4.70" viewBox="-1 -1 6.20 4.70"><path d="M0 0L2.10 2.70L4.20 0" fill="none" stroke="#fff" stroke-width="1.7" stroke-linecap="round" stroke-linejoin="round"/></svg>
<span class="t" style="left:1393.400px;top:37.3px;font:11px 'Liberation Sans',sans-serif;color:#f2f2f2;-webkit-text-stroke:0.35px #f2f2f2;line-height:20px">Find &amp;</span>
<span class="t" style="left:1393.400px;top:49.2px;font:11px 'Liberation Sans',sans-serif;color:#f2f2f2;-webkit-text-stroke:0.35px #f2f2f2;letter-spacing:0.1px;line-height:20px">Select</span>
</div>

<div id="fbar" style="left:0;top:137px;width:1511px;height:29px;background:#262626;">
<div style="left:0;top:0;width:86px;height:26px;background:#1f1f1f"></div>
<div style="left:0;top:25.5px;width:1511px;height:1px;background:#171717"></div>
<div style="left:1px;top:26.5px;width:1510px;height:2.5px;background:linear-gradient(#bdbdbd,#f4f4f4 60%,#e0e0e0)"></div>
<span class="t" style="left:11px;top:3.0px;font:12px 'Liberation Sans',sans-serif;color:#f2f2f2;-webkit-text-stroke:0.3px #f2f2f2;letter-spacing:0.1px;line-height:20px">A1</span>
<svg style="left:73px;top:4px" width="9" height="19" viewBox="0 0 9 19"><path d="M4.500 0.600L7.900 6.600H1.100Z" fill="#a8a8a8"/><path d="M4.500 18.400L7.900 12.600H1.100Z" fill="#a8a8a8"/></svg>
<svg style="left:100px;top:8px" width="12" height="12" viewBox="0 0 12 12"><path d="M1.800 1.800L10.200 10.200M10.200 1.800L1.800 10.200" stroke="#5e5e5e" stroke-width="1.800" stroke-linecap="round"/></svg>
<svg style="left:129px;top:8px" width="14" height="12" viewBox="0 0 14 12"><path d="M1.800 6.400L5.200 9.800L12.200 2" fill="none" stroke="#5e5e5e" stroke-width="1.800" stroke-linecap="round" stroke-linejoin="round"/></svg>
<span class="t" style="left:159.500px;top:3.0px;font:italic 18px 'Liberation Serif',serif;color:#a0a0a0;-webkit-text-stroke:0.3px #a0a0a0;letter-spacing:0.6px;line-height:20px">fx</span>
<div style="left:182px;top:4px;width:1320px;height:19.500px;border-radius:4px 0 0 4px;background:#2e2e2e"></div>
<span class="t" style="left:189.300px;top:4.0px;font:12.500px 'Liberation Sans',sans-serif;color:#f5f5f5;-webkit-text-stroke:0.3px #f5f5f5;line-height:20px">Name</span>
<svg style="left:1503px;top:9px" width="8" height="8" viewBox="0 0 8 8"><path d="M1 1.200H9L5 7Z" fill="#9a9a9a"/></svg>
</div>

<div id="grid">
<div class="sheetbg"></div>
<div class="selA"></div>
<div class="hl" style="top:205px"></div>
<div class="hlA" style="top:205px"></div>
<div class="hl" style="top:219px"></div>
<div class="hlA" style="top:219px"></div>
<div class="hl" style="top:233px"></div>
<div class="hlA" style="top:233px"></div>
<div class="hl" style="top:248px"></div>
<div class="hlA" style="top:248px"></div>
<div class="hl" style="top:262px"></div>
<div class="hlA" style="top:262px"></div>
<div class="hl" style="top:276px"></div>
<div class="hlA" style="top:276px"></div>
<div class="hl" style="top:290px"></div>
<div class="hlA" style="top:290px"></div>
<div class="hl" style="top:304px"></div>
<div class="hlA" style="top:304px"></div>
<div class="hl" style="top:318px"></div>
<div class="hlA" style="top:318px"></div>
<div class="hl" style="top:332px"></div>
<div class="hlA" style="top:332px"></div>
<div class="hl" style="top:346px"></div>
<div class="hlA" style="top:346px"></div>
<div class="hl" style="top:360px"></div>
<div class="hlA" style="top:360px"></div>
<div class="hl" style="top:374px"></div>
<div class="hlA" style="top:374px"></div>
<div class="hl" style="top:388px"></div>
<div class="hlA" style="top:388px"></div>
<div class="hl" style="top:402px"></div>
<div class="hlA" style="top:402px"></div>
<div class="hl" style="top:416px"></div>
<div class="hlA" style="top:416px"></div>
<div class="hl" style="top:430px"></div>
<div class="hlA" style="top:430px"></div>
<div class="hl" style="top:445px"></div>
<div class="hlA" style="top:445px"></div>
<div class="hl" style="top:460px"></div>
<div class="hlA" style="top:460px"></div>
<div class="hl" style="top:475px"></div>
<div class="hlA" style="top:475px"></div>
<div class="hl" style="top:490px"></div>
<div class="hlA" style="top:490px"></div>
<div class="hl" style="top:504px"></div>
<div class="hlA" style="top:504px"></div>
<div class="hl" style="top:519px"></div>
<div class="hlA" style="top:519px"></div>
<div class="hl" style="top:533px"></div>
<div class="hlA" style="top:533px"></div>
<div class="hl" style="top:547px"></div>
<div class="hlA" style="top:547px"></div>
<div class="hl" style="top:561px"></div>
<div class="hlA" style="top:561px"></div>
<div class="hl" style="top:575px"></div>
<div class="hlA" style="top:575px"></div>
<div class="hl" style="top:590px"></div>
<div class="hlA" style="top:590px"></div>
<div class="hl" style="top:604px"></div>
<div class="hlA" style="top:604px"></div>
<div class="hl" style="top:618px"></div>
<div class="hlA" style="top:618px"></div>
<div class="hl" style="top:632px"></div>
<div class="hlA" style="top:632px"></div>
<div class="hl" style="top:646px"></div>
<div class="hlA" style="top:646px"></div>
<div class="hl" style="top:660px"></div>
<div class="hlA" style="top:660px"></div>
<div class="hl" style="top:674px"></div>
<div class="hlA" style="top:674px"></div>
<div class="hl" style="top:688px"></div>
<div class="hlA" style="top:688px"></div>
<div class="hl" style="top:702px"></div>
<div class="hlA" style="top:702px"></div>
<div class="hl" style="top:716px"></div>
<div class="hlA" style="top:716px"></div>
<div class="hl" style="top:730px"></div>
<div class="hlA" style="top:730px"></div>
<div class="hl" style="top:744px"></div>
<div class="hlA" style="top:744px"></div>
<div class="hl" style="top:758px"></div>
<div class="hlA" style="top:758px"></div>
<div class="hl" style="top:772px"></div>
<div class="hlA" style="top:772px"></div>
<div class="hl" style="top:786px"></div>
<div class="hlA" style="top:786px"></div>
<div class="hl" style="top:801px"></div>
<div class="hlA" style="top:801px"></div>
<div class="hl" style="top:816px"></div>
<div class="hlA" style="top:816px"></div>
<div class="hl" style="top:831px"></div>
<div class="hlA" style="top:831px"></div>
<div class="vl" style="left:599px"></div>
<div class="vl" style="left:652px"></div>
<div class="vl" style="left:705px"></div>
<div class="vl" style="left:758px"></div>
<div class="vl" style="left:811px"></div>
<div class="vl" style="left:864px"></div>
<div class="vl" style="left:917px"></div>
<div class="vl" style="left:970px"></div>
<div class="vl" style="left:1023px"></div>
<div class="vl" style="left:1076px"></div>
<div class="vl" style="left:1129px"></div>
<div class="vl" style="left:1182px"></div>
<div class="vl" style="left:1235px"></div>
<div class="vl" style="left:1288px"></div>
<div class="vl" style="left:1341px"></div>
<div class="vl" style="left:1394px"></div>
<div class="vl" style="left:1447px"></div>
<div class="vl" style="left:1500px"></div>
<div class="vl" style="left:1553px"></div>
<div class="a1bg"></div>
<div class="redA"><span>Name</span></div>
<div class="redB"><span>Template</span></div>
<div class="rowhdr"></div>
<div class="rh" style="top:187px;height:19px;line-height:23px">1</div>
<div class="rh" style="top:206px;height:14px;line-height:15.6px">2</div>
<div class="ca" style="top:206px;height:14px;line-height:14px;letter-spacing:-0.079px"><u>ABC Company MSA.pdf</u></div>
<div class="rh" style="top:220px;height:14px;line-height:15.6px">3</div>
<div class="ca" style="top:220px;height:14px;line-height:14px;letter-spacing:-0.142px"><u>ABC MSA.pdf</u></div>
<div class="rh" style="top:234px;height:15px;line-height:16.6px">4</div>
<div class="ca" style="top:234px;height:15px;line-height:15px;letter-spacing:0.045px"><u>Aconex.pdf</u></div>
<div class="cb" style="top:234px;height:15px;line-height:15px;letter-spacing:0px">Customer Contracts</div>
<div class="rh" style="top:249px;height:14px;line-height:15.6px">5</div>
<div class="ca" style="top:249px;height:14px;line-height:14px;letter-spacing:-0.06px"><u>AI Marketing Agreement.pdf</u></div>
<div class="rh" style="top:263px;height:14px;line-height:15.6px">6</div>
<div class="ca" style="top:263px;height:14px;line-height:14px;letter-spacing:-0.06px"><u>AI Marketing Agreement.pdf</u></div>
<div class="rh" style="top:277px;height:14px;line-height:15.6px">7</div>
<div class="ca" style="top:277px;height:14px;line-height:14px;letter-spacing:-0.06px"><u>AI Marketing Agreement.pdf</u></div>
<div class="rh" style="top:291px;height:14px;line-height:15.6px">8</div>
<div class="ca" style="top:291px;height:14px;line-height:14px;letter-spacing:-0.06px"><u>AI Marketing Agreement.pdf</u></div>
<div class="rh" style="top:305px;height:14px;line-height:15.6px">9</div>
<div class="ca" style="top:305px;height:14px;line-height:14px;letter-spacing:-0.06px"><u>AI Marketing Agreement.pdf</u></div>
<div class="rh" style="top:319px;height:14px;line-height:15.6px">10</div>
<div class="ca" style="top:319px;height:14px;line-height:14px;letter-spacing:-0.06px"><u>AI Marketing Agreement.pdf</u></div>
<div class="rh" style="top:333px;height:14px;line-height:15.6px">11</div>
<div class="ca" style="top:333px;height:14px;line-height:14px;letter-spacing:-0.071px"><u>AI TEST- Susan G. Komen Foundation MSA.pdf</u></div>
<div class="rh" style="top:347px;height:14px;line-height:15.6px">12</div>
<div class="ca" style="top:347px;height:14px;line-height:14px;letter-spacing:-0.103px"><u>Amendment 1.pdf</u></div>
<div class="rh" style="top:361px;height:14px;line-height:15.6px">13</div>
<div class="ca" style="top:361px;height:14px;line-height:14px;letter-spacing:-0.112px"><u>Amendment.pdf</u></div>
<div class="rh" style="top:375px;height:14px;line-height:15.6px">14</div>
<div class="ca" style="top:375px;height:14px;line-height:14px;letter-spacing:-0.103px"><u>Amendment 2.pdf</u></div>
<div class="rh" style="top:389px;height:14px;line-height:15.6px">15</div>
<div class="ca" style="top:389px;height:14px;line-height:14px;letter-spacing:-0.099px"><u>Amendment 1 .pdf</u></div>
<div class="rh" style="top:403px;height:14px;line-height:15.6px">16</div>
<div class="ca" style="top:403px;height:14px;line-height:14px;letter-spacing:-0.095px"><u>amendment 1.pdf</u></div>
<div class="rh" style="top:417px;height:14px;line-height:15.6px">17</div>
<div class="ca" style="top:417px;height:14px;line-height:14px;letter-spacing:-0.095px"><u>amendment 2.pdf</u></div>
<div class="rh" style="top:431px;height:15px;line-height:16.6px">18</div>
<div class="ca" style="top:431px;height:15px;line-height:15px;letter-spacing:-0.12px"><u>Anthropologie.pdf</u></div>
<div class="cb" style="top:431px;height:15px;line-height:15px;letter-spacing:0px">Customer Contracts</div>
<div class="rh" style="top:446px;height:15px;line-height:16.6px">19</div>
<div class="ca" style="top:446px;height:15px;line-height:15px;letter-spacing:-0.151px"><u>Appfolio.pdf</u></div>
<div class="cb" style="top:446px;height:15px;line-height:15px;letter-spacing:0px">Customer Contracts</div>
<div class="rh" style="top:461px;height:15px;line-height:16.6px">20</div>
<div class="ca" style="top:461px;height:15px;line-height:15px;letter-spacing:-0.143px"><u>Apple.pdf</u></div>
<div class="cb" style="top:461px;height:15px;line-height:15px;letter-spacing:0px">Customer Contracts</div>
<div class="rh" style="top:476px;height:15px;line-height:16.6px">21</div>
<div class="ca" style="top:476px;height:15px;line-height:15px;letter-spacing:-0.136px"><u>Apple V.2.pdf</u></div>
<div class="cb" style="top:476px;height:15px;line-height:15px;letter-spacing:0px">Customer Contracts</div>
<div class="rh" style="top:491px;height:14px;line-height:15.6px">22</div>
<div class="ca" style="top:491px;height:14px;line-height:14px;letter-spacing:-0.126px"><u>Banff MSA.pdf</u></div>
<div class="rh" style="top:505px;height:15px;line-height:16.6px">23</div>
<div class="ca" style="top:505px;height:15px;line-height:15px;letter-spacing:-0.073px"><u>Barbourville Hospital .pdf</u></div>
<div class="cb" style="top:505px;height:15px;line-height:15px;letter-spacing:-0.035px">Hicuity - services - multiple hospitals</div>
<div class="rh" style="top:520px;height:14px;line-height:15.6px">24</div>
<div class="ca" style="top:520px;height:14px;line-height:14px;letter-spacing:-0.005px"><u>Basic Non-Disclosure Agreement FE.pdf</u></div>
<div class="rh" style="top:534px;height:14px;line-height:15.6px">25</div>
<div class="ca" style="top:534px;height:14px;line-height:14px;letter-spacing:0.018px"><u>Basic-Non-Disclosure-Agreement.pdf</u></div>
<div class="rh" style="top:548px;height:14px;line-height:15.6px">26</div>
<div class="ca" style="top:548px;height:14px;line-height:14px;letter-spacing:-0.083px"><u>Bauer Amendment.pdf</u></div>
<div class="rh" style="top:562px;height:14px;line-height:15.6px">27</div>
<div class="ca" style="top:562px;height:14px;line-height:14px;letter-spacing:-0.092px"><u>Bauer MSA.pdf</u></div>
<div class="rh" style="top:576px;height:15px;line-height:16.6px">28</div>
<div class="ca" style="top:576px;height:15px;line-height:15px;letter-spacing:-0.014px"><u>Beckley Hospital.pdf</u></div>
<div class="cb" style="top:576px;height:15px;line-height:15px;letter-spacing:-0.035px">Hicuity - services - multiple hospitals</div>
<div class="rh" style="top:591px;height:14px;line-height:15.6px">29</div>
<div class="ca" style="top:591px;height:14px;line-height:14px;letter-spacing:0.045px"><u>Berkshire.pdf</u></div>
<div class="rh" style="top:605px;height:14px;line-height:15.6px">30</div>
<div class="ca" style="top:605px;height:14px;line-height:14px;letter-spacing:-0.148px"><u>BonAppetit.pdf</u></div>
<div class="rh" style="top:619px;height:14px;line-height:15.6px">31</div>
<div class="ca" style="top:619px;height:14px;line-height:14px;letter-spacing:-0.022px"><u>Boston Bruins Master Service Agreement.pdf</u></div>
<div class="rh" style="top:633px;height:14px;line-height:15.6px">32</div>
<div class="ca" style="top:633px;height:14px;line-height:14px;letter-spacing:-0.083px"><u>Celtics MSA.pdf</u></div>
<div class="rh" style="top:647px;height:14px;line-height:15.6px">33</div>
<div class="ca" style="top:647px;height:14px;line-height:14px;letter-spacing:0.084px"><u>ContractWorks_DRJ NDA copy.docx</u></div>
<div class="rh" style="top:661px;height:14px;line-height:15.6px">34</div>
<div class="ca" style="top:661px;height:14px;line-height:14px;letter-spacing:0.084px"><u>ContractWorks_DRJ NDA copy.docx</u></div>
<div class="rh" style="top:675px;height:14px;line-height:15.6px">35</div>
<div class="ca" style="top:675px;height:14px;line-height:14px;letter-spacing:0.08px"><u>ContractWorks_DRJ NDA.docx</u></div>
<div class="rh" style="top:689px;height:14px;line-height:15.6px">36</div>
<div class="ca" style="top:689px;height:14px;line-height:14px;letter-spacing:0.08px"><u>ContractWorks_DRJ NDA.docx</u></div>
<div class="rh" style="top:703px;height:14px;line-height:15.6px">37</div>
<div class="ca" style="top:703px;height:14px;line-height:14px;letter-spacing:0.08px"><u>ContractWorks_DRJ NDA.docx</u></div>
<div class="rh" style="top:717px;height:14px;line-height:15.6px">38</div>
<div class="ca" style="top:717px;height:14px;line-height:14px;letter-spacing:0.08px"><u>ContractWorks_DRJ NDA.docx</u></div>
<div class="rh" style="top:731px;height:14px;line-height:15.6px">39</div>
<div class="ca" style="top:731px;height:14px;line-height:14px;letter-spacing:0.08px"><u>ContractWorks_DRJ NDA.docx</u></div>
<div class="rh" style="top:745px;height:14px;line-height:15.6px">40</div>
<div class="ca" style="top:745px;height:14px;line-height:14px;letter-spacing:0.08px"><u>ContractWorks_DRJ NDA.docx</u></div>
<div class="rh" style="top:759px;height:14px;line-height:15.6px">41</div>
<div class="ca" style="top:759px;height:14px;line-height:14px;letter-spacing:0.08px"><u>ContractWorks_DRJ NDA.docx</u></div>
<div class="rh" style="top:773px;height:14px;line-height:15.6px">42</div>
<div class="ca" style="top:773px;height:14px;line-height:14px;letter-spacing:0.078px"><u>ContractWorks_DRJ NDA.docx.pdf</u></div>
<div class="rh" style="top:787px;height:15px;line-height:16.6px">43</div>
<div class="ca" style="top:787px;height:15px;line-height:15px;letter-spacing:0.078px"><u>ContractWorks_DRJ NDA.docx.pdf</u></div>
<div class="cb" style="top:787px;height:15px;line-height:15px;letter-spacing:-0.1px">Confidentiality Agreement</div>
<div class="rh" style="top:802px;height:15px;line-height:16.6px">44</div>
<div class="ca" style="top:802px;height:15px;line-height:15px;letter-spacing:0.078px"><u>ContractWorks_DRJ NDA.docx.pdf</u></div>
<div class="cb" style="top:802px;height:15px;line-height:15px;letter-spacing:-0.1px">Confidentiality Agreement</div>
<div class="rh" style="top:817px;height:15px;line-height:16.6px">45</div>
<div class="ca" style="top:817px;height:15px;line-height:15px;letter-spacing:0.078px"><u>ContractWorks_DRJ NDA.docx.pdf</u></div>
<div class="colhdr"></div>
<div class="corner"><svg width="22" height="21" viewBox="0 0 22 21"><polygon points="20,4 20,19 5,19" fill="#4d4d4d"/></svg></div>
<div class="chA">A</div>
<div class="ch" style="left:324px;width:275px">B</div>
<div class="ch" style="left:599.5px;width:53px">C</div>
<div class="chsep" style="left:599px"></div>
<div class="ch" style="left:652.5px;width:53px">D</div>
<div class="chsep" style="left:652px"></div>
<div class="ch" style="left:705.5px;width:53px">E</div>
<div class="chsep" style="left:705px"></div>
<div class="ch" style="left:758.5px;width:53px">F</div>
<div class="chsep" style="left:758px"></div>
<div class="ch" style="left:811.5px;width:53px">G</div>
<div class="chsep" style="left:811px"></div>
<div class="ch" style="left:864.5px;width:53px">H</div>
<div class="chsep" style="left:864px"></div>
<div class="ch" style="left:917.5px;width:53px">I</div>
<div class="chsep" style="left:917px"></div>
<div class="ch" style="left:970.5px;width:53px">J</div>
<div class="chsep" style="left:970px"></div>
<div class="ch" style="left:1023.5px;width:53px">K</div>
<div class="chsep" style="left:1023px"></div>
<div class="ch" style="left:1076.5px;width:53px">L</div>
<div class="chsep" style="left:1076px"></div>
<div class="ch" style="left:1129.5px;width:53px">M</div>
<div class="chsep" style="left:1129px"></div>
<div class="ch" style="left:1182.5px;width:53px">N</div>
<div class="chsep" style="left:1182px"></div>
<div class="ch" style="left:1235.5px;width:53px">O</div>
<div class="chsep" style="left:1235px"></div>
<div class="ch" style="left:1288.5px;width:53px">P</div>
<div class="chsep" style="left:1288px"></div>
<div class="ch" style="left:1341.5px;width:53px">Q</div>
<div class="chsep" style="left:1341px"></div>
<div class="ch" style="left:1394.5px;width:53px">R</div>
<div class="chsep" style="left:1394px"></div>
<div class="ch" style="left:1447.5px;width:53px">S</div>
<div class="chsep" style="left:1447px"></div>
<div class="ch" style="left:1500.5px;width:53px">T</div>
<div class="chsep" style="left:1500px"></div>
<div class="chsep" style="left:323px"></div>
<div class="selgap"></div><div class="selborder"></div><div class="selhandle"></div>
</div>
<div id="sheettabs" style="left:0;top:833px;width:1511px;height:27px;background:#2b2b2b;">
<svg style="left:14px;top:8px" width="10" height="12" viewBox="0 0 10 12"><path d="M9 0.600V11.200L1.600 5.900Z" fill="#5a5a5a"/></svg>
<svg style="left:38px;top:8px" width="10" height="12" viewBox="0 0 10 12"><path d="M1 0.600V11.200L8.400 5.900Z" fill="#5a5a5a"/></svg>
<div style="left:62px;top:0;width:78px;height:22px;background:#fff;border-radius:0 0 3px 3px"></div>
<span class="t" style="left:79.600px;top:2.5px;font:bold 12px 'Liberation Sans',sans-serif;color:#1e7a45;letter-spacing:-0.1px;line-height:20px">Results</span>
<div style="left:155px;top:12.500px;width:10px;height:1.500px;background:#dedede"></div><div style="left:159.250px;top:8.250px;width:1.500px;height:10px;background:#dedede"></div>
<div style="left:178px;top:1px;width:1px;height:20px;background:#484848"></div>
<div style="left:0;top:25.500px;width:1511px;height:1.500px;background:#0e0e0e"></div>
</div>
<div id="statusbar" style="left:0;top:860px;width:1511px;height:21px;background:linear-gradient(#3e3e3e,#363636);">
<span class="t" style="left:25px;top:0.6999999999999993px;font:12px 'Liberation Sans',sans-serif;color:#e4e4e4;line-height:20px">Ready</span>
<svg style="left:79px;top:2px" width="18" height="18" viewBox="0 0 18 18"><circle cx="7.400" cy="3.100" r="1.700" fill="none" stroke="#e6e6e6" stroke-width="1"/><path d="M5.600 5C3.800 4.800 3 3.400 1.900 3.600C0.700 3.900 0.800 5.900 2.200 6.200L4.400 7L4 12C3.700 13.800 3 14.800 3.900 15.300C5 15.800 5.600 14.800 5.800 13.600L6.500 9.400M9.200 5C11 4.800 11.800 3.400 12.900 3.600C14.100 3.900 14 5.900 12.600 6.200L10.400 7L10.300 9.600" fill="none" stroke="#e6e6e6" stroke-width="1" stroke-linecap="round" stroke-linejoin="round"/><path d="M8 12.400L10.800 15.400L16.400 9.800" fill="none" stroke="#e6e6e6" stroke-width="1.100" stroke-linecap="round" stroke-linejoin="round"/></svg>
<span class="t" style="left:98.600px;top:0.6999999999999993px;font:12px 'Liberation Sans',sans-serif;color:#e4e4e4;letter-spacing:0.33px;line-height:20px">Accessibility: Good to go</span>
<span class="t" style="left:1126.300px;top:0.6999999999999993px;font:12px 'Liberation Sans',sans-serif;color:#e4e4e4;letter-spacing:0.27px;line-height:20px">Count: 183</span>
<div style="left:1198.500px;top:0;width:36px;height:21px;background:#4c4c4c"></div>
<svg style="left:1210px;top:4px" width="14" height="14" viewBox="0 0 14 14"><path d="M1 1H13V13H1ZM5 1V13M9 1V13M1 5H13M1 9H13" fill="none" stroke="#f0f0f0" stroke-width="1.100"/></svg>
<svg style="left:1245px;top:4px" width="14" height="14" viewBox="0 0 14 14"><path d="M1 1H13V13H1Z" fill="none" stroke="#f0f0f0" stroke-width="1.100"/><path d="M3.600 3.600H10.400V10.400H3.600ZM5 5.800H9M5 8.200H9" fill="none" stroke="#f0f0f0" stroke-width="0.900"/></svg>
<svg style="left:1281px;top:4px" width="14" height="14" viewBox="0 0 14 14"><path d="M1 1H13V13H1ZM1 8H13M5 1V8M9.400 1V8" fill="none" stroke="#f0f0f0" stroke-width="1.100"/></svg>
<div style="left:1314px;top:9.500px;width:8.500px;height:2px;background:#f0f0f0"></div>
<div style="left:1329px;top:8.700px;width:100px;height:3.500px;border-radius:1.750px;background:#666"></div>
<div style="left:1371px;top:2.400px;width:16px;height:16px;border-radius:50%;background:#a4a4a4"></div>
<div style="left:1436px;top:9.500px;width:8px;height:2px;background:#f0f0f0"></div>
<div style="left:1439px;top:6.500px;width:2px;height:8px;background:#f0f0f0"></div>
<span class="t" style="left:1461.200px;top:0.6999999999999993px;font:12px 'Liberation Sans',sans-serif;color:#e4e4e4;line-height:20px">100%</span>
</div>

<div id="menu1" style="left:903px;top:103px;width:227px;height:224px;border-radius:6px;background:#2b2b2b;box-shadow:0 0 0 1px rgba(0,0,0,.55),0 6px 16px rgba(0,0,0,.45);">
<div style="left:0;top:4.3px;width:227px;height:23.7px;background:#067a35"></div>
<div style="left:0;top:58px;width:227px;height:1.2px;background:#484848"></div>
<div style="left:0;top:142.5px;width:227px;height:1.2px;background:#484848"></div>
<!-- highlight cells icon -->
<svg style="left:20px;top:6px" width="22" height="20" viewBox="0 0 22 20">
<path d="M1.200 1.300H19.100V16.900H1.200ZM6.200 1.300V16.900M13.600 1.300V16.900M1.200 6.500H19.100M1.200 11.700H19.100" fill="none" stroke="#dcdcdc" stroke-width="0.900"/>
<path d="M6.200 11.700V6.700H13.600" fill="none" stroke="#f5b040" stroke-width="1.100"/>
<rect x="8.700" y="9.800" width="10.800" height="8.600" fill="#067a35" stroke="#f0f0f0" stroke-width="1"/>
<path d="M15.600 11.800L12.800 13.300L15.600 14.800M12.400 16.400H16.400" fill="none" stroke="#cfe8d8" stroke-width="0.700"/>
</svg>
<span class="t" style="left:44.500px;top:6.0px;font:14px 'Liberation Sans',sans-serif;color:#fff;letter-spacing:0.144px;-webkit-text-stroke:0.25px #fff;line-height:20px">Highlight Cells Rules</span>
<svg style="left:207px;top:10px" width="10" height="11" viewBox="0 0 10 11"><path d="M1 0.400V10.200L9.400 5.300Z" fill="#fff"/></svg>
<!-- top/bottom -->
<svg style="left:20px;top:30px" width="22" height="20" viewBox="0 0 22 20">
<rect x="5.300" y="1.300" width="9.600" height="15.600" fill="#ea8a24"/>
<path d="M5.700 1.300V16.900M14.600 1.300V9" stroke="#fbd37a" stroke-width="0.900"/>
<path d="M1.200 1.300H19.100V16.900H1.200ZM1.200 6.500H5.200M1.200 11.700H5.200M14.800 6.500H19.100M14.800 11.700H19.100" fill="none" stroke="#dcdcdc" stroke-width="0.900"/>
<path d="M9.600 11.500V3.600M6.900 6.400L9.600 3.400L12.300 6.400" fill="none" stroke="#2b2b2b" stroke-width="2.600"/>
<path d="M9.600 11.500V3.600M6.900 6.400L9.600 3.400L12.300 6.400" fill="none" stroke="#f0f0f0" stroke-width="1.100"/>
<rect x="9.200" y="10.300" width="10.300" height="8.400" fill="#2b2b2b" stroke="#f0f0f0" stroke-width="1"/>
<text x="11" y="16.800" font-family="Liberation Sans, sans-serif" font-size="6" fill="#d8d8d8" letter-spacing="-0.2">10</text>
</svg>
<span class="t" style="left:44.500px;top:30.0px;font:14px 'Liberation Sans',sans-serif;color:#ececec;letter-spacing:0.206px;-webkit-text-stroke:0.2px #ececec;line-height:20px">Top/Bottom Rules</span>
<svg style="left:207px;top:34px" width="10" height="11" viewBox="0 0 10 11"><path d="M1 0.400V10.200L9.400 5.300Z" fill="#ececec"/></svg>
<!-- data bars -->
<svg style="left:20px;top:66px" width="22" height="18" viewBox="0 0 22 18">
<path d="M1.200 1.300H19.100V16.900H1.200ZM5.200 1.300V16.900M14.800 1.300V16.900M1.200 6.500H19.100M1.200 11.700H19.100" fill="none" stroke="#dcdcdc" stroke-width="0.900"/>
<path d="M5.200 1.300H9.800V6.500H7.400V11.700H10.800V16.900H5.200Z" fill="#1460b0" stroke="#4aa8ec" stroke-width="0.900"/>
</svg>
<span class="t" style="left:44.500px;top:66.0px;font:14px 'Liberation Sans',sans-serif;color:#ececec;letter-spacing:-0.039px;-webkit-text-stroke:0.2px #ececec;line-height:20px">Data Bars</span>
<svg style="left:207px;top:70px" width="10" height="11" viewBox="0 0 10 11"><path d="M1 0.400V10.200L9.400 5.300Z" fill="#ececec"/></svg>
<!-- color scales -->
<svg style="left:20px;top:90px" width="22" height="18" viewBox="0 0 22 18">
<path d="M1.200 1.300H19.100V16.900H1.200ZM5.200 1.300V16.900M14.800 1.300V16.900M1.200 6.500H19.100M1.200 11.700H19.100" fill="none" stroke="#dcdcdc" stroke-width="0.900"/>
<rect x="5.200" y="1.300" width="9.600" height="5.200" fill="#1460b0" stroke="#4aa8ec" stroke-width="0.600"/><rect x="5.200" y="6.500" width="9.600" height="5.200" fill="#e8902c" stroke="#fbd37a" stroke-width="0.600"/><rect x="5.200" y="11.700" width="9.600" height="5.200" fill="#d81c24" stroke="#f06070" stroke-width="0.600"/>
</svg>
<span class="t" style="left:44.500px;top:90.0px;font:14px 'Liberation Sans',sans-serif;color:#ececec;letter-spacing:0.085px;-webkit-text-stroke:0.2px #ececec;line-height:20px">Color Scales</span>
<svg style="left:207px;top:94px" width="10" height="11" viewBox="0 0 10 11"><path d="M1 0.400V10.200L9.400 5.300Z" fill="#ececec"/></svg>
<!-- icon sets -->
<svg style="left:20px;top:114px" width="22" height="18" viewBox="0 0 22 18">
<path d="M1.200 1.300H19.100V16.900H1.200ZM5.200 1.300V16.900M14.800 1.300V16.900M1.200 6.500H19.100M1.200 11.700H19.100" fill="none" stroke="#dcdcdc" stroke-width="0.900"/>
<rect x="7.100" y="3" width="1.900" height="1.800" fill="#3aa0e8"/><rect x="7.100" y="8.200" width="1.900" height="1.800" fill="#e8414d"/><rect x="7.100" y="13.400" width="1.900" height="1.800" fill="#3aa0e8"/>
<path d="M10.800 3.700H13M10.800 8.900H13M10.800 14.100H13" stroke="#dcdcdc" stroke-width="0.900"/>
</svg>
<span class="t" style="left:44.500px;top:114.0px;font:14px 'Liberation Sans',sans-serif;color:#ececec;letter-spacing:0.069px;-webkit-text-stroke:0.2px #ececec;line-height:20px">Icon Sets</span>
<svg style="left:207px;top:118px" width="10" height="11" viewBox="0 0 10 11"><path d="M1 0.400V10.200L9.400 5.300Z" fill="#ececec"/></svg>
<!-- new rule -->
<svg style="left:20px;top:150px" width="22" height="18" viewBox="0 0 22 18">
<path d="M1.300 1.600H19V16.600H1.300ZM6.400 1.600V16.600M14 1.600V16.600M1.300 6.400H19M1.300 11.800H19" fill="none" stroke="#dcdcdc" stroke-width="0.900"/>
<rect x="6.400" y="6.400" width="7.600" height="5.400" fill="#ea8a24" stroke="#fbd37a" stroke-width="0.900"/>
</svg>
<span class="t" style="left:44.500px;top:150.0px;font:14px 'Liberation Sans',sans-serif;color:#ececec;letter-spacing:0.004px;-webkit-text-stroke:0.2px #ececec;line-height:20px">New Rule...</span>
<!-- clear rules -->
<svg style="left:20px;top:174px" width="24" height="20" viewBox="0 0 24 20">
<path d="M1.300 1.600H19V16.600H1.300ZM6.400 1.600V16.600M14 1.600V16.600M1.300 6.400H19M1.300 11.800H19" fill="none" stroke="#dcdcdc" stroke-width="0.900"/>
<rect x="6.400" y="6.400" width="7.600" height="5.400" fill="#ea8a24" stroke="#fbd37a" stroke-width="0.900"/>
<g transform="translate(14.800 13.800) rotate(-38)"><rect x="-5.400" y="-2.800" width="10.800" height="5.600" fill="#2b2b2b" stroke="#c060d0" stroke-width="1.100"/><rect x="-5.400" y="-2.800" width="4" height="5.600" fill="#a030b8"/></g>
</svg>
<span class="t" style="left:44.500px;top:174.3px;font:14px 'Liberation Sans',sans-serif;color:#ececec;letter-spacing:-0.067px;-webkit-text-stroke:0.2px #ececec;line-height:20px">Clear Rules</span>
<svg style="left:207px;top:178px" width="10" height="11" viewBox="0 0 10 11"><path d="M1 0.400V10.200L9.400 5.300Z" fill="#ececec"/></svg>
<!-- manage rules -->
<svg style="left:20px;top:197px" width="22" height="19" viewBox="0 0 22 19">
<path d="M1.300 14.500V1.300H17" fill="none" stroke="#dcdcdc" stroke-width="0.900"/>
<path d="M3.300 3.200H19V17.800H3.300ZM7.600 3.200V17.800M14.600 3.200V17.800M3.300 7.600H19M3.300 13.400H19" fill="none" stroke="#dcdcdc" stroke-width="0.900"/>
<rect x="7.600" y="7.600" width="7" height="5.800" fill="#ea8a24" stroke="#fbd37a" stroke-width="0.900"/>
</svg>
<span class="t" style="left:44.500px;top:198.0px;font:14px 'Liberation Sans',sans-serif;color:#ececec;letter-spacing:0.01px;-webkit-text-stroke:0.2px #ececec;line-height:20px">Manage Rules...</span>
</div>
<div id="menu2" style="left:1131px;top:107px;width:193px;height:212px;border-radius:6px;background:#2b2b2b;box-shadow:0 0 0 1px rgba(0,0,0,.55),0 6px 16px rgba(0,0,0,.45);">
<div style="left:0;top:178.700px;width:193px;height:1.200px;background:#484848"></div>
<svg style="left:19.400px;top:7.0px" width="24" height="20" viewBox="0 0 24 20"><rect x="5.600" y="5.900" width="8.800" height="4.200" fill="#f0952a"/><rect x="5.600" y="5.900" width="8.800" height="1.200" fill="#f8c060"/><path d="M1.200 1.600H19V14.400H1.200ZM5.600 1.600V14.400M14.400 1.600V14.400M1.200 5.900H19M1.200 10.100H19" fill="none" stroke="#a8a8a8" stroke-width="0.900"/><rect x="9" y="9.600" width="11" height="8" fill="#2b2b2b" stroke="#e0e0e0" stroke-width="1"/><path d="M12.400 11.400L16.600 13.600L12.400 15.800" fill="none" stroke="#e0e0e0" stroke-width="0.900"/></svg>
<span class="t" style="left:43.500px;top:6.0px;font:14px 'Liberation Sans',sans-serif;color:#ececec;letter-spacing:0.081px;-webkit-text-stroke:0.2px #ececec;line-height:20px">Greater Than...</span>
<svg style="left:19.400px;top:31.0px" width="24" height="20" viewBox="0 0 24 20"><rect x="5.600" y="5.900" width="8.800" height="4.200" fill="#f0952a"/><rect x="5.600" y="5.900" width="8.800" height="1.200" fill="#f8c060"/><path d="M1.200 1.600H19V14.400H1.200ZM5.600 1.600V14.400M14.400 1.600V14.400M1.200 5.900H19M1.200 10.100H19" fill="none" stroke="#a8a8a8" stroke-width="0.900"/><rect x="9" y="9.600" width="11" height="8" fill="#2b2b2b" stroke="#e0e0e0" stroke-width="1"/><path d="M16.600 11.400L12.400 13.600L16.600 15.800" fill="none" stroke="#e0e0e0" stroke-width="0.900"/></svg>
<span class="t" style="left:43.500px;top:30.0px;font:14px 'Liberation Sans',sans-serif;color:#ececec;letter-spacing:0.0px;-webkit-text-stroke:0.2px #ececec;line-height:20px">Less Than...</span>
<svg style="left:19.400px;top:55.0px" width="24" height="20" viewBox="0 0 24 20"><rect x="1.200" y="1.600" width="4.400" height="4.300" fill="#1e78d0"/><rect x="14.400" y="1.600" width="4.600" height="4.300" fill="#1e78d0"/><g transform="translate(0 0)"><rect x="5.600" y="5.900" width="8.800" height="4.200" fill="#f0952a"/><rect x="5.600" y="5.900" width="8.800" height="1.200" fill="#f8c060"/><path d="M1.200 1.600H19V14.400H1.200ZM5.600 1.600V14.400M14.400 1.600V14.400M1.200 5.900H19M1.200 10.100H19" fill="none" stroke="#a8a8a8" stroke-width="0.900"/></g></svg>
<span class="t" style="left:43.500px;top:54.0px;font:14px 'Liberation Sans',sans-serif;color:#ececec;letter-spacing:0.084px;-webkit-text-stroke:0.2px #ececec;line-height:20px">Between...</span>
<svg style="left:19.400px;top:79.0px" width="24" height="20" viewBox="0 0 24 20"><rect x="5.600" y="5.900" width="8.800" height="4.200" fill="#f0952a"/><rect x="5.600" y="5.900" width="8.800" height="1.200" fill="#f8c060"/><path d="M1.200 1.600H19V14.400H1.200ZM5.600 1.600V14.400M14.400 1.600V14.400M1.200 5.900H19M1.200 10.100H19" fill="none" stroke="#a8a8a8" stroke-width="0.900"/><rect x="9" y="9.600" width="11" height="8" fill="#2b2b2b" stroke="#e0e0e0" stroke-width="1"/><path d="M11.600 12.400H17.400M11.600 14.800H17.400" fill="none" stroke="#e0e0e0" stroke-width="0.900"/></svg>
<span class="t" style="left:43.500px;top:78.0px;font:14px 'Liberation Sans',sans-serif;color:#ececec;letter-spacing:-0.01px;-webkit-text-stroke:0.2px #ececec;line-height:20px">Equal To...</span>
<svg style="left:19.400px;top:103.0px" width="24" height="20" viewBox="0 0 24 20"><rect x="5.600" y="5.900" width="8.800" height="4.200" fill="#f0952a"/><rect x="5.600" y="5.900" width="8.800" height="1.200" fill="#f8c060"/><path d="M1.200 1.600H19V14.400H1.200ZM5.600 1.600V14.400M14.400 1.600V14.400M1.200 5.900H19M1.200 10.100H19" fill="none" stroke="#a8a8a8" stroke-width="0.900"/><rect x="9" y="9.600" width="11" height="8" fill="#2b2b2b" stroke="#e0e0e0" stroke-width="1"/><text x="12.200" y="16.400" font-family="Liberation Sans, sans-serif" font-size="7.500" fill="#e0e0e0">a</text></svg>
<span class="t" style="left:43.500px;top:102.0px;font:14px 'Liberation Sans',sans-serif;color:#ececec;letter-spacing:0.208px;-webkit-text-stroke:0.2px #ececec;line-height:20px">Text that Contains...</span>
<svg style="left:19.400px;top:127.0px" width="24" height="20" viewBox="0 0 24 20"><rect x="5.600" y="5.900" width="8.800" height="4.200" fill="#f0952a"/><rect x="5.600" y="5.900" width="8.800" height="1.200" fill="#f8c060"/><path d="M1.200 1.600H19V14.400H1.200ZM5.600 1.600V14.400M14.400 1.600V14.400M1.200 5.900H19M1.200 10.100H19" fill="none" stroke="#a8a8a8" stroke-width="0.900"/><rect x="9" y="9.600" width="11" height="8" fill="#2b2b2b" stroke="#e0e0e0" stroke-width="1"/><path d="M9 11.600H20" stroke="#e0e0e0" stroke-width="0.900"/></svg>
<span class="t" style="left:43.500px;top:126.0px;font:14px 'Liberation Sans',sans-serif;color:#ececec;letter-spacing:0.233px;-webkit-text-stroke:0.2px #ececec;line-height:20px">A Date Occurring...</span>
<svg style="left:19.400px;top:151.0px" width="24" height="20" viewBox="0 0 24 20"><g transform="translate(0 0)"><rect x="5.600" y="1.600" width="8.800" height="4.300" fill="#f0952a"/><rect x="5.600" y="10.100" width="8.800" height="4.300" fill="#f0952a"/><path d="M1.200 1.600H19V14.400H1.200ZM5.600 1.600V14.400M14.400 1.600V14.400M1.200 5.900H19M1.200 10.100H19" fill="none" stroke="#a8a8a8" stroke-width="0.900"/></g></svg>
<span class="t" style="left:43.500px;top:150.0px;font:14px 'Liberation Sans',sans-serif;color:#ececec;letter-spacing:0.131px;-webkit-text-stroke:0.2px #ececec;line-height:20px">Duplicate Values...</span>
<span class="t" style="left:43.500px;top:186.0px;font:14px 'Liberation Sans',sans-serif;color:#ececec;letter-spacing:-0.012px;-webkit-text-stroke:0.2px #ececec;line-height:20px">More Rules...</span>
</div>
<svg id="anno" style="left:0;top:0" width="1511" height="881" viewBox="0 0 1511 881">
<path d="M1094.400 113L1177.500 228" stroke="#f5141c" stroke-width="5.600" fill="none"/>
<path d="M1187 220.300L1166.600 234.500L1191 248Z" fill="#f5141c"/>
<rect x="1135.500" y="255.600" width="182.800" height="25.800" fill="none" stroke="#f5141c" stroke-width="5"/>
</svg>
<svg id="corners" style="left:0;top:0" width="1511" height="881" viewBox="0 0 1511 881">
<rect x="0" y="0" width="1" height="881" fill="#0a0a0a"/>
<path d="M0 0H9C4 0.500 1.200 3.500 1 9V10H0Z" fill="#2b4a78"/>
<path d="M1.500 30V10C1.800 4.500 4.500 1.200 10 0.800" fill="none" stroke="#505050" stroke-width="1"/>
<path d="M0 0H2.500L0 3.500Z" fill="#0c141c"/>
<path d="M0 881V869H1C1.200 875 4 880 10 881Z" fill="#101828"/>
<path d="M1511 0V3L1507 0Z" fill="#1a2433"/>
</svg>

</div>
</body></html>
